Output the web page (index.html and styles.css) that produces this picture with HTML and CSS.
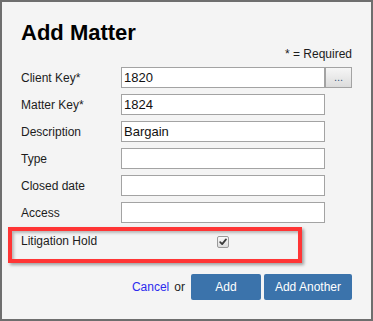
FILE: index.html
```html
<!DOCTYPE html>
<html lang="en">
<head>
  <meta charset="UTF-8" />
  <title>Add Matter</title>
  <link rel="stylesheet" href="styles.css">
</head>
<body>
  <div class="dialog">
    <h1>Add Matter</h1>
    <div class="required">* = Required</div>

    <form class="fields">
      <label for="clientKey">Client Key*</label>
      <div class="with-lookup">
        <input type="text" id="clientKey" value="1820">
        <button type="button" class="lookup">...</button>
      </div>

      <label for="matterKey">Matter Key*</label>
      <input type="text" id="matterKey" value="1824">

      <label for="description">Description</label>
      <input type="text" id="description" value="Bargain">

      <label for="type">Type</label>
      <input type="text" id="type">

      <label for="closedDate">Closed date</label>
      <input type="text" id="closedDate">

      <label for="access">Access</label>
      <input type="text" id="access">

      <div class="hold-row">
        <label>Litigation Hold</label>
        <span class="check">
          <svg width="12" height="12" viewBox="0 0 12 12">
            <path d="M2.6 6.2 L5 8.6 L9.6 2.8" fill="none" stroke="#3a3a3a" stroke-width="2.1" stroke-linecap="round" stroke-linejoin="round"/>
          </svg>
        </span>
      </div>
    </form>

    <div class="actions">
      <a href="#" class="cancel">Cancel</a>
      <span class="or">or</span>
      <button type="button" class="btn add">Add</button>
      <button type="button" class="btn">Add Another</button>
    </div>
  </div>
</body>
</html>
```

FILE: styles.css
```css
body {
  margin: 0;
  font-family: "Liberation Sans", Arial, sans-serif;
  color: #1c1c1c;
}

.dialog {
  width: 373px;
  height: 321px;
  box-sizing: border-box;
  border: 2px solid #6e6e6e;
  background: #f4f4f4;
  padding: 0 19px 0 19px;
}

h1 {
  margin: 18px 0 0;
  font-size: 22px;
  line-height: 26px;
  font-weight: bold;
  color: #000;
}

.required {
  margin-top: 1px;
  font-size: 12px;
  line-height: 14px;
  text-align: right;
}

.fields {
  display: grid;
  grid-template-columns: 100px 231px;
  grid-auto-rows: 21px;
  row-gap: 6px;
  margin: 6px 0 0;
  align-items: center;
  font-size: 12px;
}

.fields input[type="text"] {
  width: 204px;
  height: 21px;
  box-sizing: border-box;
  margin: 0;
  padding: 0 2px;
  border: 1px solid #a3a3a3;
  background: #fff;
  font-family: inherit;
  font-size: 13px;
  color: #111;
}

.with-lookup {
  display: flex;
}

.lookup {
  width: 27px;
  height: 21px;
  margin: 0;
  padding: 0 0 2px;
  border: 1px solid #a3a3a3;
  background: linear-gradient(#f6f6f6, #dcdcdc);
  font-family: inherit;
  font-size: 11px;
  color: #3a5a80;
}

.hold-row {
  grid-column: 1 / 3;
  display: grid;
  grid-template-columns: 100px 204px;
  align-items: center;
  position: relative;
  top: 1px;
}

.hold-row::after {
  content: "";
  position: absolute;
  left: -13px;
  top: -6px;
  width: 294px;
  height: 36px;
  box-sizing: border-box;
  border: 4px solid #ff3535;
  box-shadow: 2px 2px 3px rgba(0, 0, 0, 0.35), inset 2px 2px 3px rgba(0, 0, 0, 0.25);
}

.check {
  justify-self: center;
  align-self: start;
  margin-top: 3px;
  width: 12px;
  height: 12px;
  box-sizing: border-box;
  border: 1px solid #9a9a9a;
  border-radius: 2px;
  background: linear-gradient(#fafafa, #dcdcdc);
  display: flex;
  align-items: center;
  justify-content: center;
}

.check svg {
  display: block;
  width: 10px;
  height: 10px;
}

.actions {
  display: flex;
  justify-content: flex-end;
  align-items: center;
  margin-top: 24px;
  font-size: 12px;
}

.cancel {
  color: #2b2bee;
  text-decoration: none;
}

.or {
  margin: 0 6px 0 5px;
}

.btn {
  height: 26px;
  box-sizing: border-box;
  margin: 0 0 0 3px;
  padding: 0 11px;
  border: none;
  border-radius: 2px;
  background: #3b73ab;
  color: #fff;
  font-family: inherit;
  font-size: 12px;
}

.btn.add {
  min-width: 70px;
  margin-left: 0;
}
```
